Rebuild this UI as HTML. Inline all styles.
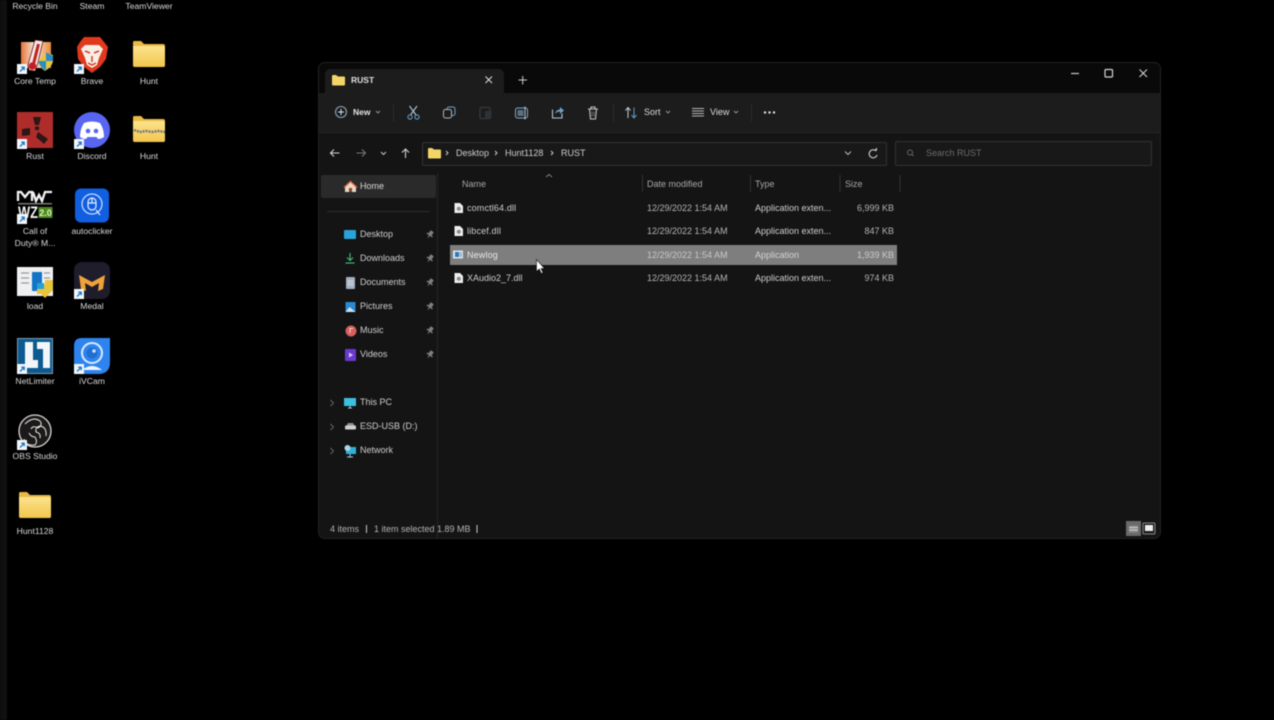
<!DOCTYPE html>
<html><head><meta charset="utf-8"><style>
*{box-sizing:border-box}
html,body{margin:0;padding:0;background:#000;width:1274px;height:720px;overflow:hidden}
body{font-family:"Liberation Sans",sans-serif;position:relative}
.t{position:absolute;white-space:nowrap;font-size:9px;line-height:12px;color:#cfcfcf}
.c{transform:translateX(-50%);text-align:center;color:#d8d8d8;font-size:8.6px}
.a{position:absolute}
svg{position:absolute;overflow:visible}
#root{position:absolute;left:0;top:0;width:1274px;height:720px;filter:blur(.5px)}
.g{color:#b4b4b4}
</style></head><body><div id="root">
<div class="a" style="left:0;top:0;width:7px;height:720px;background:#101010"></div>

<!-- Desktop labels -->
<div class="t c" style="left:35px;top:0">Recycle Bin</div>
<div class="t c" style="left:92px;top:0">Steam</div>
<div class="t c" style="left:149px;top:0">TeamViewer</div>
<div class="t c" style="left:35px;top:75px">Core Temp</div>
<div class="t c" style="left:92px;top:75px">Brave</div>
<div class="t c" style="left:149px;top:75px">Hunt</div>
<div class="t c" style="left:35px;top:150px">Rust</div>
<div class="t c" style="left:92px;top:150px">Discord</div>
<div class="t c" style="left:149px;top:150px">Hunt</div>
<div class="t c" style="left:35px;top:225px">Call of<br>Duty® M...</div>
<div class="t c" style="left:92px;top:225px">autoclicker</div>
<div class="t c" style="left:35px;top:300px">load</div>
<div class="t c" style="left:92px;top:300px">Medal</div>
<div class="t c" style="left:35px;top:375px">NetLimiter</div>
<div class="t c" style="left:92px;top:375px">iVCam</div>
<div class="t c" style="left:35px;top:450px">OBS Studio</div>
<div class="t c" style="left:35px;top:525px">Hunt1128</div>

<!-- Desktop icons -->
<svg width="1274" height="720" style="left:0;top:0">
<defs>
<linearGradient id="fo" x1="0" y1="0" x2="0" y2="1"><stop offset="0" stop-color="#fbe38c"/><stop offset="1" stop-color="#f3c64e"/></linearGradient>
<linearGradient id="ct" x1="0" y1="0" x2="1" y2="0"><stop offset="0" stop-color="#e8733a"/><stop offset=".45" stop-color="#f4e9dc"/><stop offset="1" stop-color="#e78a3c"/></linearGradient>
<g id="sc"><rect width="10" height="10" fill="#f2f6fa"/><path d="M3 7.5 7 3.5M4.2 3.2H7.2V6.2" stroke="#1878c8" stroke-width="1.3" fill="none"/></g>
<g id="fd"><path d="M0 1.5Q0 0 1.5 0H8L11 3H30Q32 3 32 5V24Q32 26 30 26H2Q0 26 0 24Z" fill="#e9ba45"/><path d="M0 5H30Q32 5 32 7V24Q32 26 30 26H2Q0 26 0 24Z" fill="url(#fo)"/></g>
</defs>

<!-- Core Temp -->
<rect x="21" y="42" width="30" height="26" fill="url(#ct)"/>
<path d="M35 40 43 41 37 66 35 71 29 70 28 65Z" fill="#f4ecea" stroke="#6a1c1c" stroke-width=".8"/>
<path d="M38.500 44 33.500 64" stroke="#c52020" stroke-width="3"/><circle cx="32.500" cy="66" r="3.800" fill="#c41e24"/>
<path d="M44 55l4-2 5 2v5q0 6-8 11-6-4-7-10Z" fill="#e8c53c"/><path d="M46 53v8h7v-5l-5-3Zm-8 8h8v10q-6-4-8-10Z" fill="#2a8cc4"/>
<use href="#sc" x="17" y="64"/>

<!-- Brave -->
<path d="M84 37H100L104 42 108 47 106 59 100 67 92 73 84 67 78 59 77 47 80 42Z" fill="#e0391c"/>
<path d="M85 45H99L103 49 99 58 97 65 92 68 87 65 85 58 81 49Z" fill="#f7efe8"/>
<path d="M85 51 90 53M99 51 94 53M92 56V62M88 63 92 65 96 63" stroke="#d54020" stroke-width="1.500" fill="none"/>
<use href="#sc" x="74" y="64"/>

<!-- Hunt folders -->
<use href="#fd" x="133" y="41"/>
<use href="#fd" x="133" y="116"/>
<path d="M134 130 140 132 146 131 152 132 158 131 165 132" stroke="#777" stroke-width="2.500" fill="none" stroke-dasharray="2 1"/>

<!-- Rust -->
<rect x="17" y="112" width="36" height="36" fill="#ae2d2b"/>
<path d="M33 117H41L39 125H35Z" fill="#2b1716"/><rect x="35" y="126.500" width="4" height="3.500" fill="#2b1716"/>
<path d="M22 129 30 128V135L22 136Z" fill="#2b1716"/>
<path d="M38 132 48 139 44 144 36 137Z" fill="#2b1716"/>
<use href="#sc" x="17" y="139"/>

<!-- Discord -->
<circle cx="92" cy="130" r="18" fill="#5865f2"/>
<path d="M84 123Q92 120 100 123 104 129 104 137 101 139 98 139L96.500 137H87.500L86 139Q83 139 80 137 80 129 84 123Z" fill="#fff"/>
<circle cx="88" cy="131" r="2.300" fill="#5865f2"/><circle cx="96" cy="131" r="2.300" fill="#5865f2"/>
<use href="#sc" x="74" y="139"/>

<!-- WZ -->
<path d="M18 201V192H21L25 197 29 192H32V201M33 192 36 201 39 195 42 201 45 192H52" fill="none" stroke="#f2f2f2" stroke-width="2.300"/>
<rect x="18" y="203" width="34" height="1.500" fill="#777"/>
<text x="18" y="218" font-family="Liberation Sans" font-weight="bold" font-size="17" fill="#f2f2f2" textLength="20" lengthAdjust="spacingAndGlyphs">WZ</text>
<rect x="38.500" y="207" width="14" height="11" fill="#4d8b1e"/>
<text x="45.500" y="216" text-anchor="middle" font-family="Liberation Sans" font-weight="bold" font-size="9" fill="#dff0c8">2.0</text>
<use href="#sc" x="17" y="214"/>

<!-- autoclicker -->
<rect x="75" y="188.500" width="34" height="34" rx="6" fill="#0f5fe0"/>
<circle cx="92" cy="204" r="10" fill="none" stroke="#cfe0ff" stroke-width="1.200"/>
<rect x="88" y="198" width="8" height="12" rx="4" fill="none" stroke="#e6eeff" stroke-width="1.200"/>
<path d="M88 203H96M92 198V203M96 210 100 215" stroke="#e6eeff" stroke-width="1.200"/>

<!-- load -->
<rect x="17" y="267" width="36" height="29" fill="#eef0f2"/>
<rect x="32" y="272" width="10" height="19" fill="#1373c6"/>
<path d="M21 273h8M21 278h8M21 283h8M44 273h6M44 278h6" stroke="#9a9a9a" stroke-width="1.300"/>
<path d="M37 284h8v-4h8v10l-8 8-4-4h-4Z" fill="#e8c53a"/><rect x="37" y="283" width="7" height="6" fill="#27a0d8"/>

<!-- Medal -->
<rect x="74" y="262" width="36" height="37" rx="8" fill="#1f1c2c"/>
<path d="M79 275 92 282 105 275 103 289 98 291 99 283 92 287 85 283 86 291 81 289Z" fill="#eea23a"/>
<use href="#sc" x="74" y="289"/>

<!-- NetLimiter -->
<rect x="17" y="338" width="36" height="36" fill="#0d5a90"/>
<rect x="17.500" y="338.500" width="35" height="35" fill="none" stroke="#7c9db5"/>
<path d="M25 342H33V360H38V368H25Z" fill="#f2f6f8"/>
<path d="M37 342H50V368H43V349H37Z" fill="#f2f6f8"/>
<use href="#sc" x="17" y="364"/>

<!-- iVCam -->
<path d="M82 338H110V362Q110 374 98 374H82Q74 374 74 366V346Q74 338 82 338Z" fill="#2e84ee"/>
<circle cx="92" cy="353" r="10" fill="none" stroke="#dceaff" stroke-width="2"/>
<circle cx="92" cy="353" r="5.500" fill="#1f6ed0"/><circle cx="94" cy="351" r="1.800" fill="#cfe4ff"/>
<path d="M82 370Q92 362 102 370Z" fill="#eef5ff"/>
<use href="#sc" x="74" y="364"/>

<!-- OBS -->
<circle cx="35" cy="431" r="16" fill="#1c1919" stroke="#d8d8d8" stroke-width="1.300"/>
<path d="M25 424Q33 416 40 421 43 425 38 428 33 425 31 429M46 436Q47 427 40 426 35 427 36 432 41 433 40 438M24 439Q26 446 35 445 38 442 35 437 31 437 29 433" fill="none" stroke="#e8e8e8" stroke-width="1"/>
<use href="#sc" x="17" y="440"/>

<!-- Hunt1128 -->
<use href="#fd" x="19" y="492"/>
</svg>

<!-- Window -->
<div class="a" style="left:319px;top:63px;width:841px;height:475px;background:#141414;border-radius:6px;overflow:hidden;box-shadow:0 0 0 1px #222">
  <div class="a" style="left:0;top:0;width:841px;height:30px;background:#090909"></div>
  <div class="a" style="left:6px;top:6px;width:179px;height:24px;background:#1c1c1c;border-radius:5px 5px 0 0"></div>
  <div class="a" style="left:0;top:30px;width:841px;height:39px;background:#1c1c1c"></div>
  <div class="a" style="left:0;top:69px;width:841px;height:1px;background:#252525"></div>
  <div class="a" style="left:74px;top:41px;width:1px;height:18px;background:#2c2c2c"></div>
  <div class="a" style="left:294px;top:41px;width:1px;height:18px;background:#2c2c2c"></div>
  <div class="a" style="left:432px;top:41px;width:1px;height:18px;background:#2c2c2c"></div>
  <!-- address -->
  <div class="a" style="left:103px;top:79px;width:465px;height:24px;background:#181818;border:1px solid #333;border-radius:2px"></div>
  <div class="a" style="left:576px;top:78px;width:257px;height:25px;background:#181818;border:1px solid #333;border-radius:2px"></div>
  <!-- nav -->
  <div class="a" style="left:2px;top:112px;width:115px;height:23px;background:#2a2a2a;border-radius:2px"></div>
  <div class="a" style="left:8px;top:148px;width:103px;height:1px;background:#2c2c2c"></div>
  <div class="a" style="left:118px;top:110px;width:1px;height:365px;background:#262626"></div>
  <!-- selected row -->
  <div class="a" style="left:131px;top:182px;width:447px;height:19.500px;background:#7e7e7e"></div>
</div>

<div class="t" style="left:351px;top:74px;font-weight:bold;color:#e0e0e0;font-size:8.500px">RUST</div>
<div class="t" style="left:353px;top:106px;color:#e4e4e4;font-weight:bold;font-size:8.500px">New</div>
<div class="t" style="left:644px;top:106px;color:#dcdcdc">Sort</div>
<div class="t" style="left:710px;top:106px;color:#dcdcdc">View</div>

<div class="t" style="left:456px;top:147px">Desktop</div>
<div class="t" style="left:505px;top:147px">Hunt1128</div>
<div class="t" style="left:561px;top:147px">RUST</div>
<div class="t" style="left:926px;top:147px;color:#6c6c6c">Search RUST</div>

<div class="t g" style="left:462px;top:178px;color:#a8a8a8">Name</div>
<div class="t g" style="left:647px;top:178px;color:#a8a8a8">Date modified</div>
<div class="t g" style="left:755px;top:178px;color:#a8a8a8">Type</div>
<div class="t g" style="left:845px;top:178px;color:#a8a8a8">Size</div>

<div class="t" style="left:360px;top:180px;color:#d8d8d8">Home</div>
<div class="t" style="left:360px;top:228px">Desktop</div>
<div class="t" style="left:360px;top:252px">Downloads</div>
<div class="t" style="left:360px;top:276px">Documents</div>
<div class="t" style="left:360px;top:300px">Pictures</div>
<div class="t" style="left:360px;top:324px">Music</div>
<div class="t" style="left:360px;top:348px">Videos</div>
<div class="t" style="left:360px;top:396px">This PC</div>
<div class="t" style="left:360px;top:420px">ESD-USB (D:)</div>
<div class="t" style="left:360px;top:444px">Network</div>

<div class="t" style="left:467px;top:202px;letter-spacing:.15px">comctl64.dll</div>
<div class="t" style="left:467px;top:225px;letter-spacing:.15px">libcef.dll</div>
<div class="t" style="left:467px;top:249px;color:#e8e8e8;letter-spacing:.15px">Newlog</div>
<div class="t" style="left:467px;top:272px">XAudio2_7.dll</div>

<div class="t g" style="left:647px;top:202px">12/29/2022 1:54 AM</div>
<div class="t g" style="left:647px;top:225px">12/29/2022 1:54 AM</div>
<div class="t" style="left:647px;top:249px;color:#c8c8c8">12/29/2022 1:54 AM</div>
<div class="t g" style="left:647px;top:272px">12/29/2022 1:54 AM</div>

<div class="t" style="left:755px;top:202px">Application exten...</div>
<div class="t" style="left:755px;top:225px">Application exten...</div>
<div class="t" style="left:755px;top:249px;color:#d4d4d4">Application</div>
<div class="t" style="left:755px;top:272px">Application exten...</div>

<div class="t g" style="right:380px;top:202px">6,999 KB</div>
<div class="t g" style="right:380px;top:225px">847 KB</div>
<div class="t" style="right:380px;top:249px;color:#cccccc">1,939 KB</div>
<div class="t g" style="right:380px;top:272px">974 KB</div>

<div class="t g" style="left:330px;top:523px">4 items</div>
<div class="t g" style="left:374px;top:523px">1 item selected</div>
<div class="t g" style="left:437px;top:523px">1.89 MB</div>

<svg width="1274" height="720" style="left:0;top:0">
<defs>
<g id="fi"><path d="M0 1Q0 0 1 0H4L6 1.500H12Q13 1.500 13 2.500V9.500Q13 10.500 12 10.500H1Q0 10.500 0 9.500Z" fill="#f5d467"/></g>
<g id="dll"><path d="M0 0H5.500L8.500 3V10H0Z" fill="#eeeeee"/><circle cx="4.300" cy="5.800" r="2" fill="#8c8c8c"/></g>
<g id="pin" transform="rotate(35)"><path d="M-1.800-4H1.800L2 0H3.500V1.200H.6L0 5-.6 1.200H-3.500V0H-2Z" fill="#7e7e7e"/></g>
<path id="chev" d="M0 0 3 3 0 6" fill="none" stroke="#666" stroke-width="1"/>
<path id="bc" d="M0 0 2 2 0 4" fill="none" stroke="#ccc" stroke-width="1"/>
</defs>

<!-- Tab -->
<use href="#fi" x="332" y="75"/>
<path d="M485.500 76.500 492 83M492 76.500 485.500 83" stroke="#e0e0e0" stroke-width="1"/>
<path d="M518.500 80H527M522.700 76V84.500" stroke="#cfcfcf" stroke-width="1"/>
<!-- Window buttons -->
<path d="M1071 73.500H1079" stroke="#c8c8c8" stroke-width="1.200"/>
<rect x="1105" y="69.500" width="7.500" height="7.500" rx="1" fill="none" stroke="#d4d4d4" stroke-width="1.200"/>
<path d="M1139.500 69.500 1147 77M1147 69.500 1139.500 77" stroke="#d4d4d4" stroke-width="1"/>

<!-- Toolbar -->
<circle cx="341" cy="112" r="5.500" fill="none" stroke="#8ea6bc" stroke-width="1.100"/>
<path d="M338 112H344M341 109V115" stroke="#d8e4ee" stroke-width="1"/>
<path d="M376 111 378 113 380 111" fill="none" stroke="#999" stroke-width=".9"/>
<!-- cut -->
<path d="M409.500 106 416 115M417 106 410.500 115" stroke="#b5c4d0" stroke-width="1.100"/>
<circle cx="410" cy="117" r="2.100" fill="none" stroke="#6fa4c8"/><circle cx="417" cy="117" r="2.100" fill="none" stroke="#6fa4c8"/>
<!-- copy -->
<rect x="447" y="107" width="8" height="8.500" rx="2" fill="none" stroke="#6fa4c8"/>
<rect x="443.500" y="109.500" width="8" height="8.500" rx="2" fill="#1c1c1c" stroke="#aab6c0"/>
<!-- paste -->
<rect x="480" y="107.500" width="10" height="11" rx="1" fill="none" stroke="#3a3e42"/>
<rect x="485" y="111" width="6.500" height="7.500" fill="#2c3236"/>
<!-- rename -->
<rect x="515.500" y="108" width="12" height="10" rx="2" fill="none" stroke="#7fa8c8"/>
<rect x="517.500" y="110" width="6" height="6" fill="#7fa8c8" opacity=".6"/>
<path d="M525 106.500V119.500" stroke="#b8c4cc"/>
<!-- share -->
<path d="M552.500 109.500V118H562V113.500" fill="none" stroke="#b8c4cc" stroke-width="1.100"/>
<path d="M555 114Q556 109.500 560 109.500V107L564 110.500 560 114V111.500Q557 111.500 555 114Z" fill="#6fa4c8"/>
<!-- delete -->
<path d="M588 109H598M589.500 109 590.500 119H595.500L596.500 109M591 109V107H595V109" fill="none" stroke="#c4c4c4" stroke-width="1.100"/>
<path d="M592 111.500V116.500M594 111.500V116.500" stroke="#909090" stroke-width=".7"/>
<!-- sort -->
<path d="M628 118V108M625.500 110.500 628 107.500 630.500 110.500" fill="none" stroke="#c4ccd2"/>
<path d="M634 107.500V117.500M631.500 115 634 118 636.500 115" fill="none" stroke="#5a9cc8"/>
<path d="M666 111 668 113 670 111" fill="none" stroke="#999" stroke-width=".9"/>
<!-- view -->
<path d="M692 108.500H704M692 111H704M692 113.500H704M692 116H704" stroke="#b4b4b4" stroke-width="1"/>
<path d="M734 111 736 113 738 111" fill="none" stroke="#999" stroke-width=".9"/>
<circle cx="765" cy="112.500" r="1.200" fill="#e0e0e0"/><circle cx="769.500" cy="112.500" r="1.200" fill="#e0e0e0"/><circle cx="774" cy="112.500" r="1.200" fill="#e0e0e0"/>

<!-- Nav arrows -->
<path d="M339.500 153H330.500M334 149.500 330.500 153 334 156.500" fill="none" stroke="#d4d4d4" stroke-width="1.100"/>
<path d="M356.500 153H365M362 149.500 365.500 153 362 156.500" fill="none" stroke="#777" stroke-width="1.100"/>
<path d="M381 152 383.500 154.500 386 152" fill="none" stroke="#c0c0c0" stroke-width="1.100"/>
<path d="M405.500 158V149M402 152.500 405.500 149 409 152.500" fill="none" stroke="#d0d0d0" stroke-width="1.100"/>
<use href="#fi" x="428" y="148"/>
<use href="#bc" x="446" y="151"/><use href="#bc" x="495" y="151"/><use href="#bc" x="551" y="151"/>
<path d="M845 151.500 848 154.500 851 151.500" fill="none" stroke="#bbb" stroke-width="1"/>
<path d="M876 151A4 4 0 1 0 877 155" fill="none" stroke="#c8c8c8" stroke-width="1.100"/><path d="M874 150.500H877V147.500Z" fill="#c8c8c8"/>
<circle cx="910" cy="152.500" r="2.500" fill="none" stroke="#666"/><path d="M912 154.500 913.500 156" stroke="#666"/>

<!-- column -->
<path d="M546 177 549 174.500 552 177" fill="none" stroke="#888" stroke-width=".9"/>
<path d="M642.500 175V192M750.500 175V192M840 175V192M900 175V192" stroke="#333" stroke-width="1"/>

<!-- Nav icons -->
<path d="M345 187 350.500 182 356 187V192H345Z" fill="#e9d6c4"/><path d="M344 187.500 350.500 181.500 357 187.500" fill="none" stroke="#d86a3a" stroke-width="1.300"/><rect x="349" y="188" width="3" height="4" fill="#7a4a2a"/>
<rect x="344" y="230" width="12" height="9" rx="1" fill="#2aa4d8"/>
<path d="M350 253V260M347 257.500 350 260.500 353 257.500" fill="none" stroke="#4cbf78" stroke-width="1.100"/><path d="M345.500 263H354.500" stroke="#4cbf78" stroke-width="1.100"/>
<rect x="346" y="277" width="9" height="12" rx="1" fill="#a4b0c0"/><path d="M347.500 281H353.500M347.500 283H353.500M347.500 285H353.500" stroke="#e0e4ea" stroke-width=".7"/>
<rect x="345.500" y="302" width="10" height="10" fill="#2c88d0"/><path d="M345.500 312 349.500 307 355.500 312Z" fill="#c6e4f6"/>
<circle cx="351" cy="331" r="5.500" fill="#d6605c"/><path d="M350 333V328.500H353" stroke="#f2d0c8" fill="none"/>
<rect x="345" y="349" width="11" height="12" rx="1" fill="#6a3ad0"/><path d="M349 352.500V357.500L353 355Z" fill="#d8c8f8"/>
<rect x="344" y="398" width="12" height="8" fill="#3cc0e0"/><path d="M348 408H352M350 406V408" stroke="#a8c8d4"/>
<rect x="345" y="425.500" width="11" height="4" rx="1" fill="#d0d0d0"/><path d="M346.500 425.500 348 423H353L354.500 425.500" fill="#909090"/>
<rect x="346" y="447" width="10" height="7" fill="#30b0d8"/><circle cx="347.500" cy="448" r="3" fill="#a8d8e8"/><path d="M350 454V457M347 457H353" stroke="#a8c8d4"/>

<!-- Pins -->
<use href="#pin" x="430" y="234.500"/><use href="#pin" x="430" y="258.500"/><use href="#pin" x="430" y="282.500"/><use href="#pin" x="430" y="306.500"/><use href="#pin" x="430" y="330.500"/><use href="#pin" x="430" y="354.500"/>
<!-- Chevrons -->
<use href="#chev" x="330.500" y="400"/><use href="#chev" x="330.500" y="424"/><use href="#chev" x="330.500" y="448"/>

<!-- File icons -->
<use href="#dll" x="454.500" y="203"/><use href="#dll" x="454.500" y="226"/><use href="#dll" x="454.500" y="273"/>
<rect x="453" y="250.500" width="10" height="8" fill="#dfe6ec"/><rect x="455" y="252" width="4" height="5" fill="#2a78c0"/><rect x="459.500" y="252" width="2.500" height="5" fill="#9cb8d0"/>

<!-- Cursor -->
<path d="M536.500 259.500V271.500L539.300 269 541.300 273.500 543 272.700 541 268.500H544.500Z" fill="#fff" stroke="#111" stroke-width=".6"/>

<!-- Status -->
<path d="M366.500 525V533M477 525V533" stroke="#c8c8c8" stroke-width="1"/>
<rect x="1126" y="521" width="15" height="15" fill="#6a6a6a"/>
<path d="M1129 525.500H1138V532.500H1129Z" fill="#8a8a8a"/><path d="M1129 527.500H1138M1129 530H1138" stroke="#d0d0d0" stroke-width="1"/>
<rect x="1143" y="523" width="12" height="11" rx="1" fill="#1e1e1e" stroke="#888"/>
<rect x="1145" y="525" width="8" height="6" fill="#eee"/>
</svg>
</div></body></html>
